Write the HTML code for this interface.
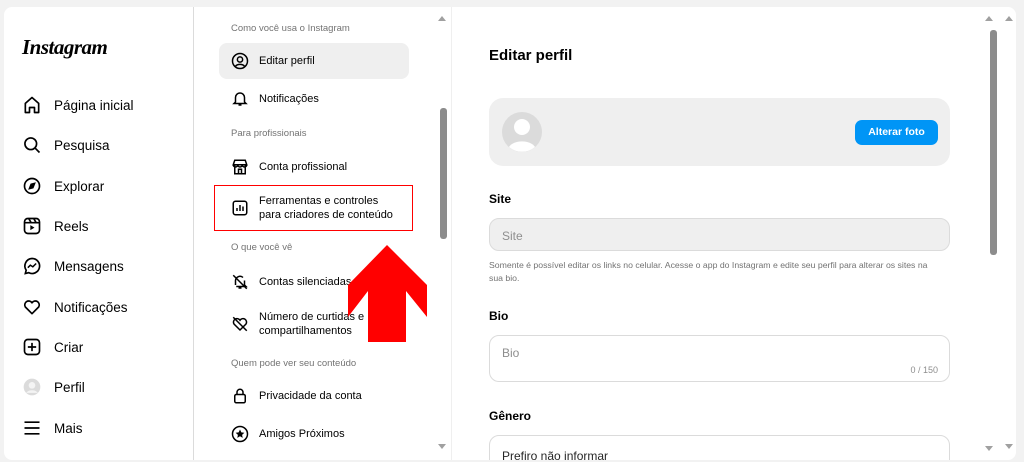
<!DOCTYPE html>
<html><head><meta charset="utf-8"><style>
*{margin:0;padding:0;box-sizing:border-box}
body{width:1024px;height:462px;background:#f2f2f2;font-family:"Liberation Sans",sans-serif;color:#000;position:relative;overflow:hidden}
.frame{position:absolute;left:4px;top:7px;width:1012px;height:453px;background:#fff;border-radius:8px;overflow:hidden}
.side{position:absolute;left:0;top:0;width:190px;height:453px;border-right:1px solid #dbdbdb}
.logo{position:absolute;left:18px;top:28px;font-family:"Liberation Serif",serif;font-style:italic;font-size:21px;font-weight:bold;letter-spacing:-.5px}
.nav{position:absolute;left:18px;font-size:13.5px;display:flex;align-items:center}
.nav svg{width:20px;height:20px;margin-right:12px}
.mid{position:absolute;left:190px;top:0;width:258px;height:453px;border-right:1px solid #efefef}
.h{position:absolute;left:37px;font-size:9.5px;color:#737373}
.it{position:absolute;left:25px;width:190px;display:flex;align-items:center;font-size:11px;line-height:14px}
.it svg{width:18px;height:18px;margin-right:10px;flex:none}
.sel{background:#efefef;border-radius:8px}
.right{position:absolute;left:449px;top:0;width:563px;height:453px}
.lbl{position:absolute;left:36px;font-weight:bold;font-size:12px}
.sb{position:absolute;background:#8c8c8c;border-radius:3px}
.tri{position:absolute;width:0;height:0;border-left:4px solid transparent;border-right:4px solid transparent}
.up{border-bottom:5px solid #a0a0a0}.dn{border-top:5px solid #a0a0a0}
</style></head><body>
<div class="frame">
<div class="side">
<div class="logo">Instagram</div>
<div class="nav" style="top:88px"><svg viewBox="0 0 24 24" fill="none" stroke="#000" stroke-width="2"><path d="M4 21V10l8-7 8 7v11h-5v-6H9v6z" stroke-linejoin="round"/></svg>Página inicial</div>
<div class="nav" style="top:128px"><svg viewBox="0 0 24 24" fill="none" stroke="#000" stroke-width="2"><circle cx="10.5" cy="10.5" r="7"/><path d="M16 16l5 5"/></svg>Pesquisa</div>
<div class="nav" style="top:169px"><svg viewBox="0 0 24 24" fill="none" stroke="#000" stroke-width="2"><circle cx="12" cy="12" r="9"/><path d="M9 15l2-5 4-1-2 5z" fill="#000"/></svg>Explorar</div>
<div class="nav" style="top:209px"><svg viewBox="0 0 24 24" fill="none" stroke="#000" stroke-width="2"><rect x="3" y="3" width="18" height="18" rx="4"/><path d="M3 8h18M8 3l3 5M14 3l3 5"/><path d="M10 11v6l5-3z" fill="#000" stroke="none"/></svg>Reels</div>
<div class="nav" style="top:249px"><svg viewBox="0 0 24 24" fill="none" stroke="#000" stroke-width="2"><path d="M12 3a9 9 0 1 1-4 17l-4 1 1-4A9 9 0 0 1 12 3z"/><path d="M7 14l3-3 3 2 4-4" stroke-width="1.8"/></svg>Mensagens</div>
<div class="nav" style="top:290px"><svg viewBox="0 0 24 24" fill="none" stroke="#000" stroke-width="2"><path d="M12 20l-8-8a4.5 4.5 0 0 1 8-5 4.5 4.5 0 0 1 8 5z" stroke-linejoin="round"/></svg>Notificações</div>
<div class="nav" style="top:330px"><svg viewBox="0 0 24 24" fill="none" stroke="#000" stroke-width="2"><rect x="3" y="3" width="18" height="18" rx="4"/><path d="M12 7v10M7 12h10"/></svg>Criar</div>
<div class="nav" style="top:370px"><svg viewBox="0 0 24 24"><circle cx="12" cy="12" r="10" fill="#dbdbdb"/><circle cx="12" cy="10" r="4" fill="#f4f4f4"/><path d="M5 19a8 6 0 0 1 14 0" fill="#f4f4f4"/></svg>Perfil</div>
<div class="nav" style="top:411px"><svg viewBox="0 0 24 24" fill="none" stroke="#000" stroke-width="2"><path d="M3 5h18M3 12h18M3 19h18"/></svg>Mais</div>
</div>
<div class="mid">
<div class="h" style="top:16px">Como você usa o Instagram</div>
<div class="it sel" style="top:36px;height:36px;padding-left:12px"><svg viewBox="0 0 24 24" fill="none" stroke="#000" stroke-width="2"><circle cx="12" cy="12" r="10"/><circle cx="12" cy="10" r="3.5"/><path d="M6 19a7 5 0 0 1 12 0"/></svg>Editar perfil</div>
<div class="it" style="top:82px;height:20px;padding-left:12px"><svg viewBox="0 0 24 24" fill="none" stroke="#000" stroke-width="2"><path d="M6 16V10a6 6 0 0 1 12 0v6l2 2H4z M10 20h4"/></svg>Notificações</div>
<div class="h" style="top:121px">Para profissionais</div>
<div class="it" style="top:150px;height:20px;padding-left:12px"><svg viewBox="0 0 24 24" fill="none" stroke="#000" stroke-width="2"><path d="M3 9l2-6h14l2 6zM5 9v12h14V9M10 21v-6h4v6M3 9a3 3 0 0 0 6 0a3 3 0 0 0 6 0a3 3 0 0 0 6 0"/></svg>Conta profissional</div>
<div style="position:absolute;left:20px;top:178px;width:199px;height:46px;border:1.5px solid #f00"></div>
<div class="it" style="top:187px;padding-left:12px"><svg viewBox="0 0 24 24" fill="none" stroke="#000" stroke-width="2"><rect x="3" y="3" width="18" height="18" rx="3"/><path d="M8 16v-4M12 16V8M16 16v-6"/></svg>Ferramentas e controles<br>para criadores de conteúdo</div>
<div class="h" style="top:235px">O que você vê</div>
<div class="it" style="top:265px;height:20px;padding-left:12px"><svg viewBox="0 0 24 24" fill="none" stroke="#000" stroke-width="2"><path d="M6 16V10a6 6 0 0 1 10-4M18 10v6l2 2H7M10 20h4M3 3l18 18"/></svg>Contas silenciadas</div>
<div class="it" style="top:303px;padding-left:12px"><svg viewBox="0 0 24 24" fill="none" stroke="#000" stroke-width="2"><path d="M12 20l-8-8a4.5 4.5 0 0 1 8-5 4.5 4.5 0 0 1 8 5zM3 3l18 18"/></svg>Número de curtidas e<br>compartilhamentos</div>
<div class="h" style="top:351px">Quem pode ver seu conteúdo</div>
<div class="it" style="top:379px;height:20px;padding-left:12px"><svg viewBox="0 0 24 24" fill="none" stroke="#000" stroke-width="2"><rect x="5" y="10" width="14" height="11" rx="2"/><path d="M8 10V7a4 4 0 0 1 8 0v3"/></svg>Privacidade da conta</div>
<div class="it" style="top:417px;height:20px;padding-left:12px"><svg viewBox="0 0 24 24" fill="none" stroke="#000" stroke-width="2"><circle cx="12" cy="12" r="10"/><path d="M12 6l1.8 3.8 4 .5-3 2.8.8 4L12 15l-3.6 2.1.8-4-3-2.8 4-.5z" fill="#000" stroke="none"/></svg>Amigos Próximos</div>
<svg style="position:absolute;left:154px;top:238px" width="79" height="97" viewBox="0 0 79 97"><path d="M39 0L79 40V72L58 46V97H20V46L0 72V40Z" fill="#f00"/></svg>
<div class="tri up" style="left:244px;top:9px"></div>
<div class="sb" style="left:246px;top:101px;width:7px;height:131px"></div>
<div class="tri dn" style="left:244px;top:437px"></div>
</div>
<div class="right">
<div style="position:absolute;left:36px;top:40px;font-weight:bold;font-size:15px">Editar perfil</div>
<div style="position:absolute;left:36px;top:91px;width:461px;height:68px;background:#efefef;border-radius:14px">
<svg style="position:absolute;left:12px;top:12px" width="42" height="44" viewBox="0 0 42 44"><circle cx="21" cy="22" r="20" fill="#dbdbdb"/><circle cx="21" cy="17" r="8" fill="#fff"/><path d="M8 37a14 9 0 0 1 26 0a20 20 0 0 1-26 0z" fill="#fff"/></svg>
<div style="position:absolute;right:12px;top:22px;width:83px;height:25px;background:#0095f6;border-radius:7px;color:#fff;font-size:10.5px;font-weight:bold;text-align:center;line-height:25px">Alterar foto</div>
</div>
<div class="lbl" style="top:185px">Site</div>
<div style="position:absolute;left:36px;top:211px;width:461px;height:33px;background:#efefef;border:1px solid #dbdbdb;border-radius:10px;font-size:12px;color:#8e8e8e;padding:10px 12px">Site</div>
<div style="position:absolute;left:36px;top:252px;width:450px;font-size:8.7px;color:#737373;line-height:12.5px">Somente é possível editar os links no celular. Acesse o app do Instagram e edite seu perfil para alterar os sites na sua bio.</div>
<div class="lbl" style="top:302px">Bio</div>
<div style="position:absolute;left:36px;top:328px;width:461px;height:47px;border:1px solid #dbdbdb;border-radius:10px;font-size:12px;color:#8e8e8e;padding:10px 12px">Bio<span style="position:absolute;right:11px;top:29px;font-size:9px">0 / 150</span></div>
<div class="lbl" style="top:402px">Gênero</div>
<div style="position:absolute;left:36px;top:428px;width:461px;height:40px;border:1px solid #dbdbdb;border-radius:10px;font-size:12px;color:#262626;padding:13px 12px">Prefiro não informar</div>
<div class="tri up" style="left:532px;top:9px"></div>
<div class="sb" style="left:537px;top:23px;width:7px;height:225px"></div>
<div class="tri dn" style="left:532px;top:439px"></div>
</div>
</div>
<div class="tri up" style="left:1005px;top:16px"></div>
<div class="tri dn" style="left:1005px;top:444px"></div>
</body></html>
